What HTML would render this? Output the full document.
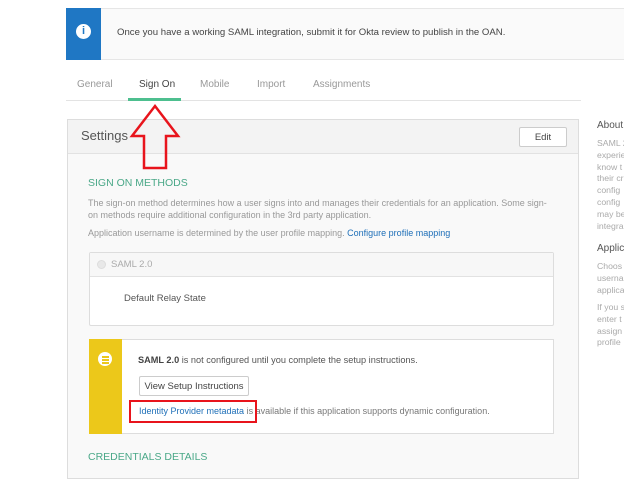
<html><head><style>
body{margin:0;width:624px;height:472px;background:#fff;font-family:"Liberation Sans",sans-serif;position:relative;overflow:hidden;color:#5f5f5f}
div,span{position:absolute}
.t{white-space:nowrap}
</style></head><body>
<div style="left:66px;top:8px;width:570px;height:52px;background:#fafafa;border:1px solid #e6e6e6;box-sizing:border-box"></div>
<div style="left:66px;top:8px;width:35px;height:52px;background:#1f77c4"></div>
<div style="left:76px;top:24px;width:15px;height:15px;border-radius:50%;background:#fff;color:#1f77c4;font-size:11px;font-weight:bold;text-align:center;line-height:15px">i</div>
<div class="t" style="left:117px;top:27px;font-size:9.6px;color:#444">Once you have a working SAML integration, submit it for Okta review to publish in the OAN.</div>
<div class="t" style="left:77px;top:79px;font-size:10px;color:#999">General</div>
<div class="t" style="left:139px;top:79px;font-size:10px;color:#444">Sign On</div>
<div class="t" style="left:200px;top:79px;font-size:10px;color:#999">Mobile</div>
<div class="t" style="left:257px;top:79px;font-size:10px;color:#999">Import</div>
<div class="t" style="left:313px;top:79px;font-size:10px;color:#999">Assignments</div>
<div style="left:66px;top:100px;width:515px;height:1px;background:#e3e3e3"></div>
<div style="left:128px;top:98px;width:53px;height:3px;background:#4dbf8f"></div>
<div style="left:67px;top:119px;width:512px;height:360px;background:#f9f9f9;border:1px solid #ddd;box-sizing:border-box"></div>
<div style="left:68px;top:120px;width:510px;height:33px;background:#f3f3f3;border-bottom:1px solid #e2e2e2"></div>
<div class="t" style="left:81px;top:128px;font-size:13px;color:#555">Settings</div>
<div style="left:519px;top:127px;width:48px;height:20px;background:#fff;border:1px solid #ccc;box-sizing:border-box;border-radius:2px;font-size:9.5px;text-align:center;padding-top:4px;color:#444">Edit</div>
<div class="t" style="left:88px;top:177px;font-size:10.5px;color:#4aa888">SIGN ON METHODS</div>
<div style="left:88px;top:198px;width:465px;font-size:9px;line-height:11.5px;color:#999">The sign-on method determines how a user signs into and manages their credentials for an application. Some sign-on methods require additional configuration in the 3rd party application.</div>
<div class="t" style="left:88px;top:228px;font-size:9px;color:#999">Application username is determined by the user profile mapping. <span style="position:static;color:#1e6fb8">Configure profile mapping</span></div>
<div style="left:89px;top:252px;width:465px;height:74px;background:#fff;border:1px solid #ddd;box-sizing:border-box;border-radius:2px"></div>
<div style="left:90px;top:253px;width:463px;height:23px;background:#f7f7f7;border-bottom:1px solid #e2e2e2"></div>
<div style="left:97px;top:260px;width:7px;height:7px;border-radius:50%;background:#e8e8e8;border:1px solid #ddd"></div>
<div class="t" style="left:111px;top:259px;font-size:9.5px;color:#aaa">SAML 2.0</div>
<div class="t" style="left:124px;top:293px;font-size:9.5px;color:#555">Default Relay State</div>
<div style="left:89px;top:339px;width:465px;height:95px;background:#fff;border:1px solid #ddd;box-sizing:border-box"></div>
<div style="left:89px;top:339px;width:33px;height:95px;background:#ecc81a"></div>
<div style="left:98px;top:352px;width:14px;height:14px;border-radius:50%;background:#fff"></div>
<div style="left:102px;top:356px;width:7px;height:1.5px;background:#ecc81a;box-shadow:0 3px #ecc81a,0 6px #ecc81a"></div>
<div class="t" style="left:138px;top:355px;font-size:9.2px;color:#555"><b style="color:#444">SAML 2.0</b> is not configured until you complete the setup instructions.</div>
<div style="left:139px;top:376px;width:110px;height:20px;background:#fff;border:1px solid #ccc;box-sizing:border-box;border-radius:2px;font-size:9.5px;text-align:center;padding-top:4px;color:#444">View Setup Instructions</div>
<div class="t" style="left:139px;top:406px;font-size:9px;color:#777"><span style="position:static;color:#1e6fb8">Identity Provider metadata</span> is available if this application supports dynamic configuration.</div>
<div style="left:129px;top:400px;width:128px;height:23px;border:2.5px solid #e8141c;box-sizing:border-box"></div>
<div class="t" style="left:88px;top:451px;font-size:10.5px;color:#4aa888">CREDENTIALS DETAILS</div>
<svg style="position:absolute;left:0;top:0" width="624" height="472"><polygon points="155,106 178,136 166,136 166,168 144,168 144,136 132,136" fill="none" stroke="#e8141c" stroke-width="2.5"/></svg>
<div class="t" style="left:597px;top:120px;font-size:10px;color:#555">About</div>
<div style="left:597px;top:138px;width:40px;font-size:8.7px;line-height:11.8px;color:#aaa;white-space:nowrap">SAML 2<br>experie<br>know t<br>their cr<br>config<br>config<br>may be<br>integra</div>
<div class="t" style="left:597px;top:243px;font-size:10px;color:#555">Applic</div>
<div style="left:597px;top:261px;font-size:8.7px;line-height:11.8px;color:#aaa;white-space:nowrap">Choos<br>userna<br>applica</div>
<div style="left:597px;top:302px;font-size:8.7px;line-height:11.8px;color:#aaa;white-space:nowrap">If you s<br>enter t<br>assign<br>profile</div>
</body></html>
